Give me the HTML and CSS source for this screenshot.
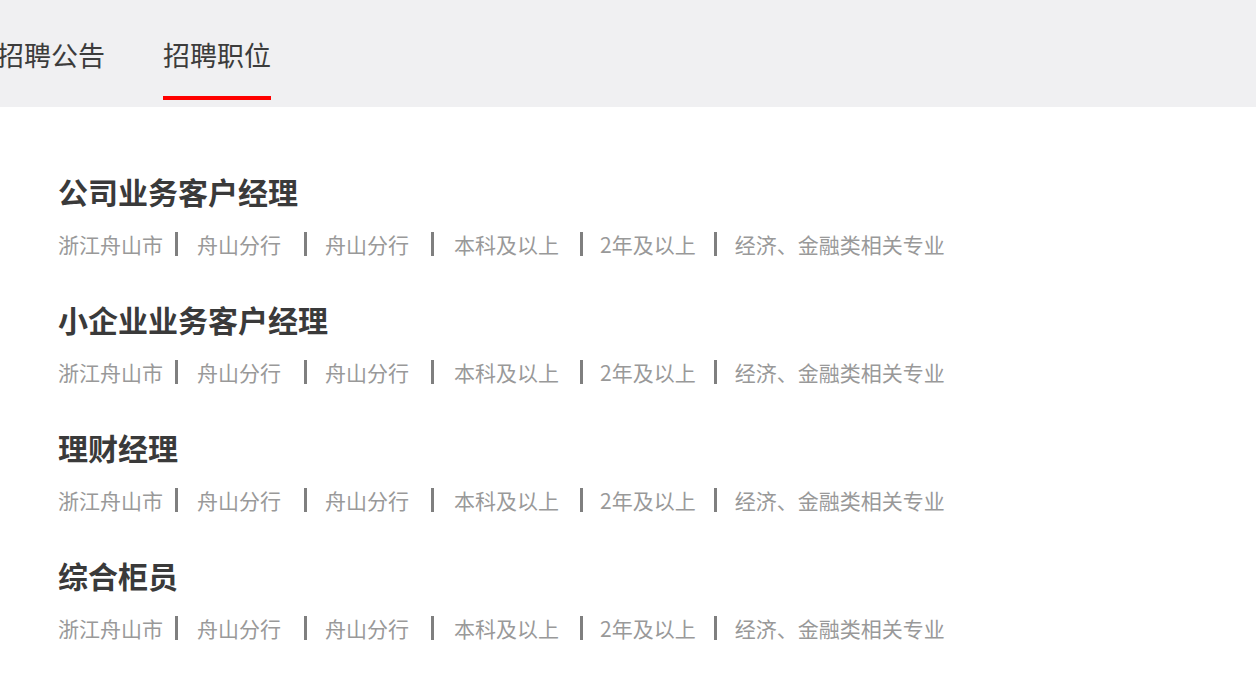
FILE: index.html
```html
<!DOCTYPE html>
<html lang="zh-CN">
<head>
<meta charset="utf-8">
<title>招聘职位</title>
<link rel="stylesheet" href="styles.css">
</head>
<body>
<header class="header">
  <nav class="tabs">
    <a class="tab">招聘公告</a>
    <a class="tab tab-active">招聘职位</a>
  </nav>
</header>
<main class="list">
  <section class="job">
    <h2 class="job-title">公司业务客户经理</h2>
    <div class="meta">
      <span class="meta-item">浙江舟山市</span>
      <span class="meta-item">舟山分行</span>
      <span class="meta-item">舟山分行</span>
      <span class="meta-item">本科及以上</span>
      <span class="meta-item">2年及以上</span>
      <span class="meta-item">经济、金融类相关专业</span>
    </div>
  </section>
  <section class="job">
    <h2 class="job-title">小企业业务客户经理</h2>
    <div class="meta">
      <span class="meta-item">浙江舟山市</span>
      <span class="meta-item">舟山分行</span>
      <span class="meta-item">舟山分行</span>
      <span class="meta-item">本科及以上</span>
      <span class="meta-item">2年及以上</span>
      <span class="meta-item">经济、金融类相关专业</span>
    </div>
  </section>
  <section class="job">
    <h2 class="job-title">理财经理</h2>
    <div class="meta">
      <span class="meta-item">浙江舟山市</span>
      <span class="meta-item">舟山分行</span>
      <span class="meta-item">舟山分行</span>
      <span class="meta-item">本科及以上</span>
      <span class="meta-item">2年及以上</span>
      <span class="meta-item">经济、金融类相关专业</span>
    </div>
  </section>
  <section class="job">
    <h2 class="job-title">综合柜员</h2>
    <div class="meta">
      <span class="meta-item">浙江舟山市</span>
      <span class="meta-item">舟山分行</span>
      <span class="meta-item">舟山分行</span>
      <span class="meta-item">本科及以上</span>
      <span class="meta-item">2年及以上</span>
      <span class="meta-item">经济、金融类相关专业</span>
    </div>
  </section>
</main>
</body>
</html>
```
FILE: styles.css
```css
* { box-sizing: border-box; }
html, body {
  margin: 0;
  padding: 0;
  background: #ffffff;
  font-family: "Noto Sans CJK SC", "Noto Sans", sans-serif;
}
.header {
  height: 107px;
  background: #f0f0f2;
  display: flex;
  align-items: flex-start;
}
.tabs {
  display: flex;
  gap: 58px;
  margin-left: -3px;
}
.tab {
  display: block;
  padding-top: 35px;
  padding-bottom: 21px;
  height: 100px;
  font-size: 27px;
  line-height: 40px;
  color: #3c3c3c;
  border-bottom: 4px solid transparent;
  white-space: nowrap;
}
.tab-active {
  border-bottom-color: #ff0000;
}
.list {
  padding: 66px 0 0 58px;
}
.job {
  margin-bottom: 40px;
}
.job-title {
  margin: 0;
  font-size: 30px;
  line-height: 36px;
  font-weight: 700;
  color: #3a3a3a;
}
.meta {
  display: flex;
  align-items: center;
  height: 34px;
  margin-top: 18px;
  font-size: 21px;
  color: #999999;
}
.meta-item {
  display: block;
  height: 24px;
  line-height: 24px;
  padding: 0 21px 0 18px;
  border-left: 3px solid #7f7f7f;
  white-space: nowrap;
}
.meta-item:nth-child(1) {
  padding-left: 0;
  padding-right: 12px;
  border-left: none;
}
.meta-item:nth-child(2) {
  padding-left: 19px;
  padding-right: 23px;
}
.meta-item:nth-child(3) {
  padding-right: 22px;
}
.meta-item:nth-child(4) {
  padding-left: 20px;
}
.meta-item:nth-child(5) {
  padding-left: 17px;
  padding-right: 18px;
}
.meta-item:nth-child(6) {
  padding-left: 18px;
}
```
